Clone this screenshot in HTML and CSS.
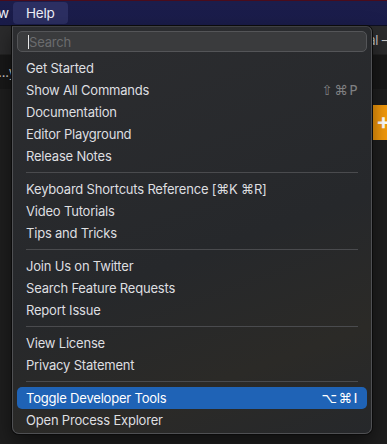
FILE: index.html
```html
<!DOCTYPE html>
<html>
<head>
<meta charset="utf-8">
<link rel="stylesheet" href="styles.css">
</head>
<body>
<div class="topbar">
  <span class="tb-item tb-cut">w</span>
  <span class="tb-item tb-active">Help</span>
</div>
<div class="workspace">
  <div class="tabs"><span class="tab-text">al –</span></div>
  <div class="editor">
    <div class="file-row"><span class="file-text">‥.y</span></div>
  </div>
  <div class="fab">+</div>
</div>

<div class="menu">
  <div class="search"><span class="caret"></span><span class="placeholder">Search</span></div>
  <div class="items">
    <div class="item"><span>Get Started</span></div>
    <div class="item"><span>Show All Commands</span><span class="key">⇧⌘P</span></div>
    <div class="item"><span>Documentation</span></div>
    <div class="item"><span>Editor Playground</span></div>
    <div class="item"><span>Release Notes</span></div>
    <div class="sep"></div>
    <div class="item"><span>Keyboard Shortcuts Reference [⌘K ⌘R]</span></div>
    <div class="item"><span>Video Tutorials</span></div>
    <div class="item"><span>Tips and Tricks</span></div>
    <div class="sep"></div>
    <div class="item"><span>Join Us on Twitter</span></div>
    <div class="item"><span>Search Feature Requests</span></div>
    <div class="item"><span>Report Issue</span></div>
    <div class="sep"></div>
    <div class="item"><span>View License</span></div>
    <div class="item"><span>Privacy Statement</span></div>
    <div class="sep"></div>
    <div class="item active"><span>Toggle Developer Tools</span><span class="key">⌥⌘I</span></div>
    <div class="item"><span>Open Process Explorer</span></div>
  </div>
</div>
</body>
</html>
```
FILE: styles.css
```css
html, body {
  margin: 0;
  padding: 0;
}
body {
  width: 387px;
  height: 444px;
  overflow: hidden;
  position: relative;
  background: #1f1f20;
  font-family: Inter, "Noto Sans", "DejaVu Sans", sans-serif;
  font-size: 13px;
  letter-spacing: -0.2px;
  color: #dcdcdc;
}
.topbar {
  height: 25px;
  background: linear-gradient(#4a0c1c 0, #4a0c1c 1px, #1b1d4b 1px, #1a1c4a 100%);
  display: flex;
  align-items: center;
  border-bottom: 1px solid #0e0f22;
}
.tb-item {
  color: #eceef6;
  font-size: 13.5px;
  line-height: 22px;
}
.tb-cut {
  margin-left: -2px;
  width: 15px;
}
.tb-active {
  background: #2c2f62;
  border-radius: 4px;
  padding: 0 13px 0 13px;
  height: 22px;
  margin-top: 1px;
}
.workspace {
  position: relative;
  height: 418px;
  display: flex;
  flex-direction: column;
}
.tabs {
  height: 28px;
  background: #2b2b2c;
  display: flex;
  justify-content: flex-end;
  align-items: center;
  border-bottom: 1px solid #222;
}
.tab-text {
  color: #c8c8c8;
  font-size: 13px;
  margin-right: -1px;
}
.editor {
  flex: 1;
  background: #1e1e1e;
}
.file-row {
  height: 34px;
  background: #181818;
  display: flex;
  align-items: center;
}
.file-text {
  margin-left: -2px;
  color: #d0d0d0;
}
.fab {
  position: absolute;
  right: 0;
  top: 79px;
  width: 14px;
  height: 35px;
  background: #f49a0c;
  color: #fff;
  font-weight: 700;
  font-size: 22px;
  line-height: 33px;
  padding-left: 3px;
  overflow: hidden;
  box-sizing: border-box;
}
.menu {
  position: absolute;
  left: 12px;
  top: 26px;
  width: 360px;
  height: 408px;
  box-sizing: border-box;
  background: linear-gradient(160deg, #2c2d30 0%, #26282b 55%, #2b2a27 80%, #26282b 100%);
  border: 1px solid #4f5053;
  border-top-color: #3f4043;
  border-radius: 0 6px 7px 7px;
  box-shadow: 0 0 0 1px #0b0b0b, 0 8px 20px rgba(0,0,0,0.5);
  padding: 4px 4px 0 4px;
  display: flex;
  flex-direction: column;
}
.search {
  height: 21px;
  box-sizing: border-box;
  border: 1px solid #545558;
  border-radius: 5px;
  background: #3a3b3d;
  display: flex;
  align-items: center;
  padding-left: 10px;
}
.caret {
  width: 1px;
  height: 14px;
  background: #e8e8e8;
}
.placeholder {
  color: #6b6c6e;
  font-size: 13px;
}
.items {
  margin-top: 5px;
  display: flex;
  flex-direction: column;
}
.item {
  height: 22px;
  display: flex;
  align-items: center;
  justify-content: space-between;
  padding: 0 9px 0 9px;
  border-radius: 5px;
  color: #dedfe0;
}
.item.active {
  background: #1f63b6;
  color: #ffffff;
}
.key {
  font-family: "DejaVu Sans", sans-serif;
  font-size: 13.5px;
  color: #7f8082;
  letter-spacing: 1.5px;
  margin-right: -1px;
}
.item.active .key {
  color: #ffffff;
}
.sep {
  height: 1px;
  background: #4a4b4e;
  margin: 5px 9px;
}
```
